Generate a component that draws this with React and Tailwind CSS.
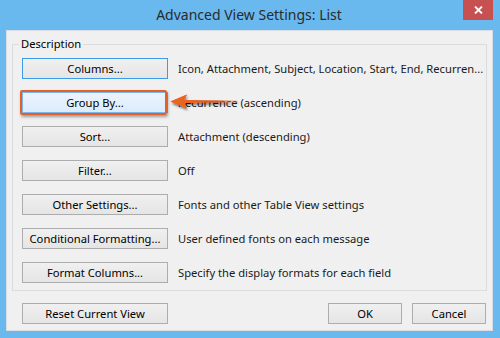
import React from 'react';

const font = { fontFamily: '"Noto Sans", "Open Sans", sans-serif' };

const rows = [
  { label: 'Columns...', text: 'Icon, Attachment, Subject, Location, Start, End, Recurren...', focus: true },
  { label: 'Group By...', text: 'Recurrence (ascending)', marked: true },
  { label: 'Sort...', text: 'Attachment (descending)' },
  { label: 'Filter...', text: 'Off' },
  { label: 'Other Settings...', text: 'Fonts and other Table View settings' },
  { label: 'Conditional Formatting...', text: 'User defined fonts on each message' },
  { label: 'Format Columns...', text: 'Specify the display formats for each field' },
];

function WinButton({ children, focus, hot, className = '' }) {
  let look = 'border-[#adadad] bg-gradient-to-b from-[#f0f0f0] to-[#e5e5e5]';
  if (focus) look = 'border-[#3c9ae8] bg-gradient-to-b from-[#f0f0f0] to-[#e5e5e5]';
  if (hot) look = 'border-[#7eb4ea] bg-gradient-to-b from-[#ecf4fc] to-[#dcecfc]';
  return (
    <button type="button" className={`h-[21px] border ${look} text-[11.2px] leading-none text-black flex items-center justify-center ${className}`}>
      {children}
    </button>
  );
}

function Arrow() {
  return (
    <svg width="72" height="20" viewBox="0 0 72 20" className="absolute left-[146px] top-[0px] pointer-events-none">
      <defs>
        <linearGradient id="shaft" x1="0" x2="1" y1="0" y2="0">
          <stop offset="0" stopColor="#e8611f" />
          <stop offset="0.7" stopColor="#d9571c" stopOpacity="0.9" />
          <stop offset="1" stopColor="#c9521e" stopOpacity="0.15" />
        </linearGradient>
        <filter id="sh" x="-10%" y="-40%" width="130%" height="200%">
          <feDropShadow dx="1" dy="2" stdDeviation="1.2" floodColor="#000" floodOpacity="0.55" />
        </filter>
      </defs>
      <path d="M2.5 9.5 L19 2.5 L16 8 L70 8.4 L70 10.6 L16 11 L19 16.5 Z" fill="url(#shaft)" filter="url(#sh)" />
      <path d="M2.5 9.5 L19 2.5 L16 8 L30 8.2 L30 10.8 L16 11 L19 16.5 Z" fill="#ea6420" />
    </svg>
  );
}

export default function App() {
  return (
    <div className="w-[500px] h-[338px] bg-[#69b8ee] flex flex-col overflow-hidden" style={font}>
      {/* title bar */}
      <div className="relative h-[30px] flex items-center justify-center">
        <span className="text-[14px] text-[#2b2b2b] leading-none ml-[-2px]">Advanced View Settings: List</span>
        <div className="absolute right-[7px] top-0 w-[30px] h-[20px] bg-[#c75050] flex items-center justify-center">
          <svg width="9" height="8" viewBox="0 0 9 8">
            <path d="M1 0.5 L8 7.5 M8 0.5 L1 7.5" stroke="#fff" strokeWidth="1.8" />
          </svg>
        </div>
      </div>

      {/* client area */}
      <div className="ml-[6px] mr-[7px] h-[301px] bg-[#f0f0f0] border border-[#d6dde4] pt-[5px]">
        <fieldset className="ml-[5px] w-[475px] border border-[#dcdcdc] pl-[9px] pb-[7px]">
          <legend className="ml-[-3px] px-[2px] text-[11.2px] leading-[16px] text-black">Description</legend>
          <div className="flex flex-col gap-[13px] pt-[6px]">
            {rows.map((r) => (
              <div key={r.label} className="relative flex items-center gap-[10px]">
                <WinButton focus={r.focus} hot={r.marked} className="w-[146px]">{r.label}</WinButton>
                <span className="text-[11.2px] leading-none text-[#1a1a1a] whitespace-nowrap">{r.text}</span>
                {r.marked && (
                  <>
                    <div className="absolute left-[-2px] top-[-2px] w-[147px] h-[25px] border-2 border-[#e2612b] rounded-[2px] shadow-[1px_2px_3px_rgba(0,0,0,0.35)] pointer-events-none" />
                    <Arrow />
                  </>
                )}
              </div>
            ))}
          </div>
        </fieldset>

        <div className="flex items-center mt-[12px] pl-[15px] pr-[6px]">
          <WinButton className="w-[146px]">Reset Current View</WinButton>
          <div className="flex-1" />
          <WinButton className="w-[74px]">OK</WinButton>
          <WinButton className="w-[74px] ml-[10px]">Cancel</WinButton>
        </div>
      </div>
    </div>
  );
}
